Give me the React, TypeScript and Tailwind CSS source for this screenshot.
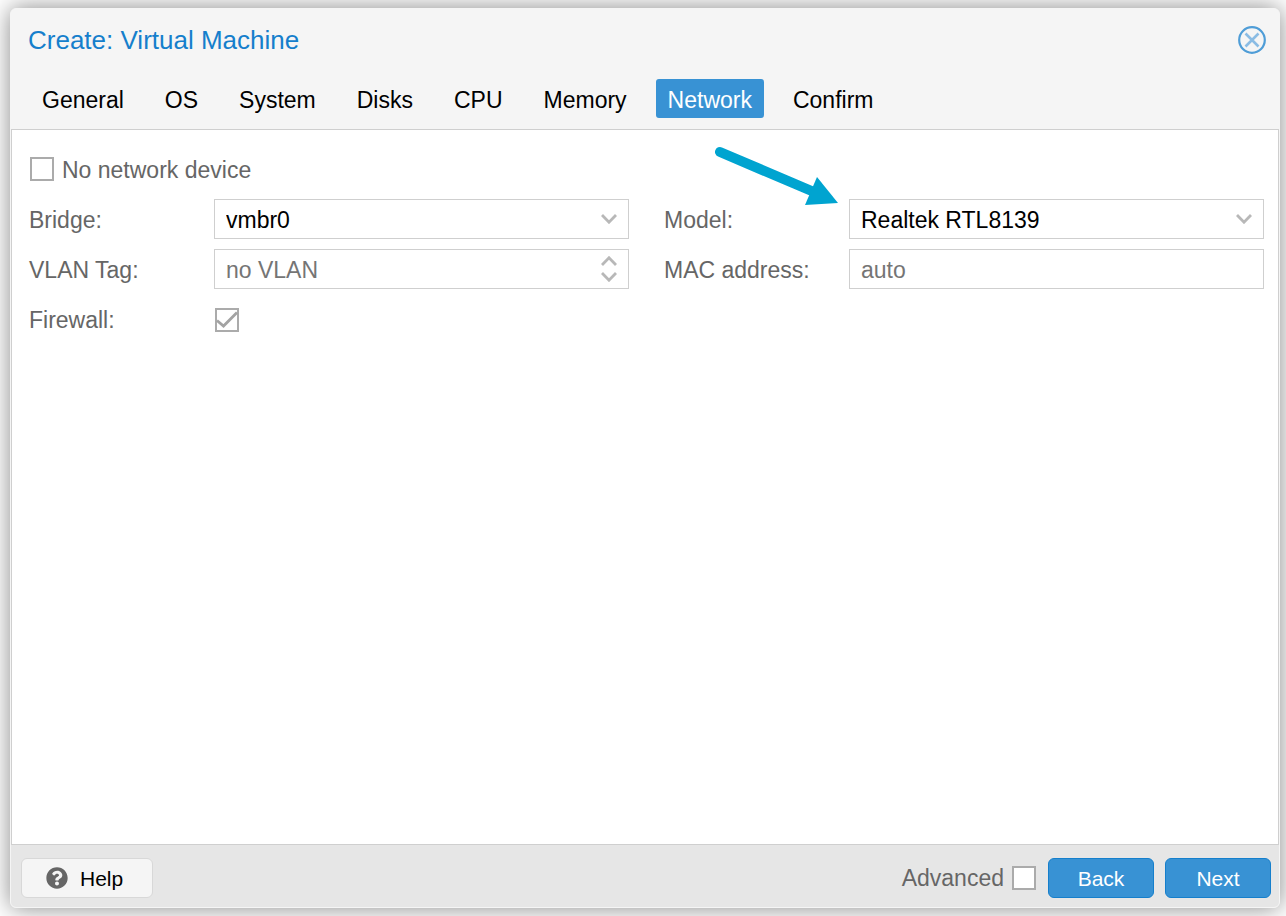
import { useState } from "react";
import type { ReactNode } from "react";
import { FaQuestionCircle } from "react-icons/fa";

const tabs = ["General", "OS", "System", "Disks", "CPU", "Memory", "Network", "Confirm"];

const fieldClass =
  "block w-full h-10 appearance-none rounded-none border border-[#cfcfcf] bg-white pt-[2px] pl-[11px] pr-10 text-[23px] text-black outline-none placeholder:text-[#757575] focus:border-[#3892d4]";

function Chevron({ up = false }: { up?: boolean }) {
  return (
    <svg width="16" height="10" viewBox="0 0 16 10" fill="none" stroke="#b8b8b8" strokeWidth="2.8">
      <path d={up ? "M1 9 8 1.8 15 9" : "M1 1 8 8.2 15 1"} />
    </svg>
  );
}

function Row({ id, label, children }: { id: string; label: string; children: ReactNode }) {
  return (
    <div className="flex h-10 items-center">
      <label htmlFor={id} className="w-[185px] shrink-0 pt-[2px]">
        {label}
      </label>
      <div className="relative min-w-0 flex-1">{children}</div>
    </div>
  );
}

function Select({ id, options }: { id: string; options: string[] }) {
  return (
    <>
      <select id={id} className={fieldClass}>
        {options.map((option) => (
          <option key={option}>{option}</option>
        ))}
      </select>
      <span className="pointer-events-none absolute inset-y-0 right-3 flex items-center">
        <Chevron />
      </span>
    </>
  );
}

function Checkbox({ id, defaultChecked = false }: { id: string; defaultChecked?: boolean }) {
  return (
    <span className="relative block size-6 shrink-0">
      <input
        id={id}
        type="checkbox"
        defaultChecked={defaultChecked}
        className="peer block size-6 appearance-none border-2 border-[#ababab] bg-white"
      />
      <svg
        viewBox="0 0 24 24"
        className="pointer-events-none absolute inset-0 hidden size-6 peer-checked:block"
        fill="none"
        stroke="#a3a3a3"
        strokeWidth="2.8"
      >
        <path d="M2 12.5 8.5 18 22 4.5" />
      </svg>
    </span>
  );
}

export default function App() {
  const [activeTab, setActiveTab] = useState("Network");
  const [vlan, setVlan] = useState("");

  const stepVlan = (step: number) => {
    const next = (Number(vlan) || 0) + step;
    setVlan(next > 0 ? String(next) : "");
  };

  return (
    <div className="flex min-h-screen bg-white pt-2 pr-[6px] pb-2 pl-[10px] font-['Liberation_Sans',Arial,sans-serif] text-[23px] leading-7 text-[#666]">
      <div className="flex flex-1 flex-col overflow-hidden rounded-md border border-[#f5f5f5] bg-[#f5f5f5] shadow-[0_0_24px_#888]">
        {/* Title bar */}
        <div className="flex h-[62px] items-center justify-between pr-[13px] pl-[17px]">
          <h1 className="text-[26px] text-[#157fcc]">Create: Virtual Machine</h1>
          <button type="button" aria-label="Close">
            <svg width="28" height="28" viewBox="0 0 28 28" fill="none">
              <circle cx="14" cy="14" r="12.8" stroke="#4f9dd7" strokeWidth="2.2" />
              <path d="M7.5 7.5 20.5 20.5M20.5 7.5 7.5 20.5" stroke="#8abce4" strokeWidth="2.6" />
            </svg>
          </button>
        </div>

        {/* Wizard steps */}
        <nav className="flex gap-[17px] px-[19px] pt-2 pb-[11px]">
          {tabs.map((tab) => (
            <button
              key={tab}
              type="button"
              onClick={() => setActiveTab(tab)}
              className={`h-[39px] rounded-[3px] px-3 pt-[2px] ${
                activeTab === tab ? "bg-[#3892d4] text-white" : "text-black"
              }`}
            >
              {tab}
            </button>
          ))}
        </nav>

        <div className="flex-1 border border-[#cfcfcf] bg-white pt-[19px] pr-[14px] pl-[17px]">
          <div className="flex h-10 items-center gap-2 pl-px">
            <Checkbox id="no-network" />
            <label htmlFor="no-network" className="pt-[2px]">
              No network device
            </label>
          </div>

          <div className="mt-[10px] grid grid-cols-2 gap-[35px]">
            <div className="flex flex-col gap-[10px]">
              <Row id="bridge" label="Bridge:">
                <Select id="bridge" options={["vmbr0"]} />
              </Row>
              <Row id="vlan" label="VLAN Tag:">
                <input
                  id="vlan"
                  type="text"
                  placeholder="no VLAN"
                  value={vlan}
                  onChange={(e) => setVlan(e.target.value)}
                  className={fieldClass}
                />
                <div className="absolute inset-y-0 right-3 flex flex-col justify-center gap-[6px]">
                  <button type="button" aria-label="Increase VLAN tag" onClick={() => stepVlan(1)}>
                    <Chevron up />
                  </button>
                  <button type="button" aria-label="Decrease VLAN tag" onClick={() => stepVlan(-1)}>
                    <Chevron />
                  </button>
                </div>
              </Row>
              <Row id="firewall" label="Firewall:">
                <div className="pt-px pl-px">
                  <Checkbox id="firewall" defaultChecked />
                </div>
              </Row>
            </div>

            <div className="relative flex flex-col gap-[10px]">
              <Row id="model" label="Model:">
                <Select id="model" options={["Realtek RTL8139"]} />
              </Row>
              <Row id="mac" label="MAC address:">
                <input id="mac" type="text" placeholder="auto" className={fieldClass} />
              </Row>

              {/* Arrow pointing at the model field */}
              <svg
                width="126"
                height="60"
                viewBox="0 0 126 60"
                className="pointer-events-none absolute -top-[53px] left-[50px]"
                aria-hidden="true"
              >
                <path d="M6 6 100 46" stroke="#00a4d0" strokeWidth="10" strokeLinecap="round" />
                <path d="M103 31 124 57 91 59Z" fill="#00a4d0" />
              </svg>
            </div>
          </div>
        </div>

        {/* Footer */}
        <div className="flex items-center justify-between bg-[#e6e6e6] pt-[13px] pr-2 pb-[9px] pl-[10px]">
          <button
            type="button"
            className="flex h-10 w-[132px] items-center gap-3 rounded-md border border-[#d8d8d8] bg-[#f5f5f5] px-6 text-[21px] text-black"
          >
            <FaQuestionCircle size={22} color="#666" />
            <span className="pt-[2px]">Help</span>
          </button>
          <div className="flex items-center gap-3">
            <div className="flex items-center gap-2">
              <label htmlFor="advanced">Advanced</label>
              <Checkbox id="advanced" />
            </div>
            <div className="flex gap-[11px]">
              <button
                type="button"
                className="h-10 w-[106px] rounded-md border border-[#157fcc] bg-[#3892d4] pt-[2px] text-[21px] text-white"
              >
                Back
              </button>
              <button
                type="button"
                className="h-10 w-[106px] rounded-md border border-[#157fcc] bg-[#3892d4] pt-[2px] text-[21px] text-white"
              >
                Next
              </button>
            </div>
          </div>
        </div>
      </div>
    </div>
  );
}
